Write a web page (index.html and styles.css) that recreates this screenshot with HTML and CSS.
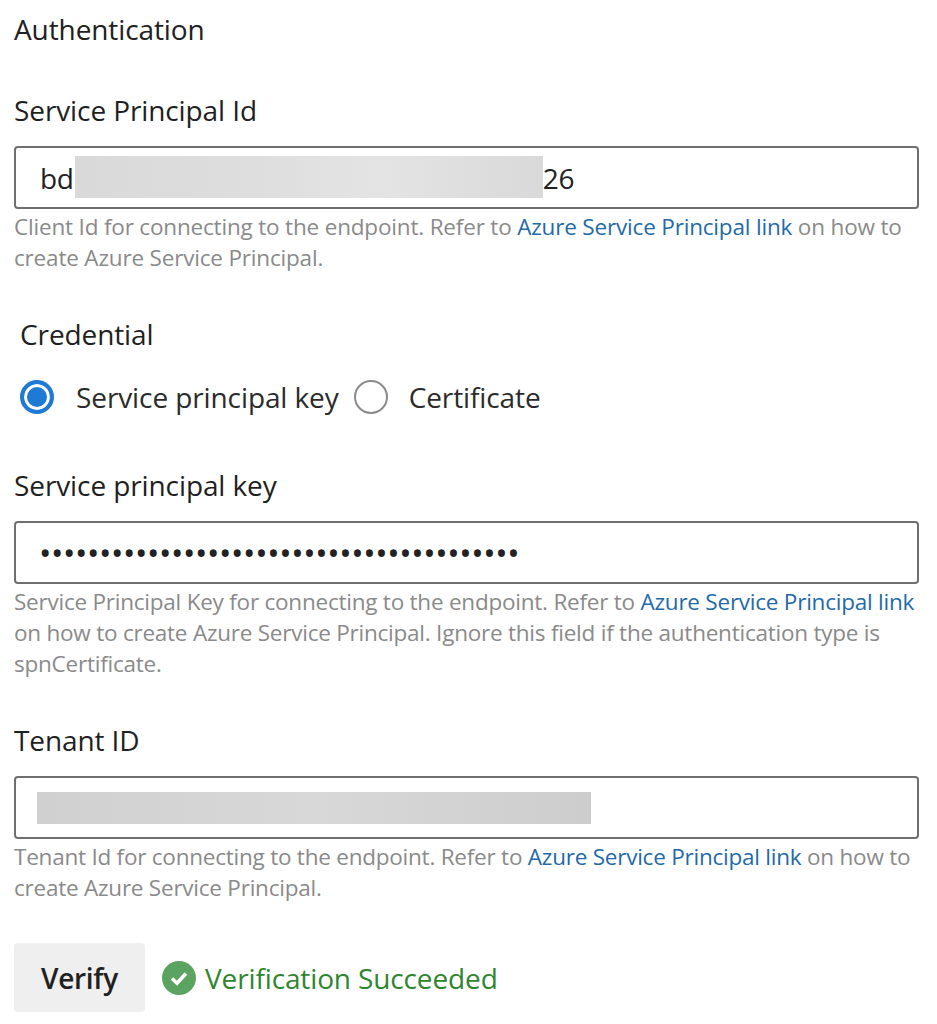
FILE: index.html
```html
<!DOCTYPE html>
<html lang="en">
<head>
<meta charset="utf-8">
<title>Authentication</title>
<link rel="stylesheet" href="styles.css">
</head>
<body>
<main class="form">
  <h2 class="title">Authentication</h2>

  <section class="field field-spn">
    <label class="label">Service Principal Id</label>
    <div class="input">
      <span>bd</span><span class="redact redact-id"></span><span>26</span>
    </div>
    <p class="help help-first">Client Id for connecting to the endpoint. Refer to <a href="#">Azure Service Principal link</a> on how to<br>create Azure Service Principal.</p>
  </section>

  <section class="credential">
    <div class="label">Credential</div>
    <div class="radios">
      <span class="radio radio-on"></span><span class="radio-text">Service principal key</span>
      <span class="radio"></span><span class="radio-text">Certificate</span>
    </div>
  </section>

  <section class="field field-key">
    <label class="label">Service principal key</label>
    <div class="input input-dots">
      <span class="dots">••••••••••••••••••••••••••••••••••••••••</span>
    </div>
    <p class="help">Service Principal Key for connecting to the endpoint. Refer to <a href="#">Azure Service Principal link</a><br>on how to create Azure Service Principal. Ignore this field if the authentication type is<br>spnCertificate.</p>
  </section>

  <section class="field field-tenant">
    <label class="label">Tenant ID</label>
    <div class="input input-tenant">
      <span class="redact redact-tenant"></span>
    </div>
    <p class="help">Tenant Id for connecting to the endpoint. Refer to <a href="#">Azure Service Principal link</a> on how to<br>create Azure Service Principal.</p>
  </section>

  <div class="actions">
    <button class="verify" type="button">Verify</button>
    <svg class="check" viewBox="0 0 34 34" aria-hidden="true">
      <circle cx="17" cy="17" r="17" fill="#5ba361"/>
      <path d="M10 17.5l5 4.8L24 12.5" fill="none" stroke="#fff" stroke-width="3.6"/>
    </svg>
    <span class="status">Verification Succeeded</span>
  </div>
</main>
</body>
</html>
```

FILE: styles.css
```css
* { box-sizing: border-box; }
html, body { margin: 0; background: #fff; }
body {
  font-family: "Open Sans", "Noto Sans", "Liberation Sans", sans-serif;
  color: #212121;
  height: 1024px;
  overflow: hidden;
}
.form { padding: 9px 18px 0 14px; }
.title {
  margin: 0;
  font-size: 28px;
  font-weight: 400;
  line-height: 40px;
  letter-spacing: -0.1px;
}
.label {
  display: block;
  font-size: 28px;
  line-height: 40px;
  letter-spacing: -0.1px;
  color: #1f1f1f;
}
.field-spn { margin-top: 41px; }
.field-key { margin-top: 49px; }
.field-tenant { margin-top: 41px; }
.input {
  display: flex;
  align-items: center;
  margin-top: 16px;
  height: 63px;
  padding: 0 24px;
  border: 2px solid #6f6f6f;
  border-radius: 4px;
  font-size: 28px;
  letter-spacing: -0.3px;
}
.redact { display: block; }
.redact-id {
  width: 468px;
  height: 42px;
  margin: 0 0 2px 1px;
  background: linear-gradient(90deg, #d9d9d9, #dedede 40%, #e4e4e4 65%, #d9d9d9);
}
.redact-tenant {
  width: 554px;
  height: 32px;
  background: linear-gradient(90deg, #d0d0d0, #d8d8d8 50%, #cdcdcd);
}
.input-tenant { padding-left: 21px; }
.input-dots { padding-left: 23px; }
.dots { letter-spacing: -0.4px; font-size: 33px; color: #222; }
.help {
  margin: 2px 0 0;
  font-size: 22.5px;
  line-height: 31px;
  letter-spacing: -0.23px;
  color: #8a8a8a;
  white-space: nowrap;
}
.help-first { letter-spacing: -0.18px; }
.help a { color: #1f6aa8; text-decoration: none; }
.credential { margin-top: 41px; padding-left: 6px; }
.radios {
  display: flex;
  align-items: center;
  margin-top: 24px;
  font-size: 28px;
  letter-spacing: -0.1px;
  color: #2b2b2b;
}
.radio {
  flex: none;
  width: 34px;
  height: 34px;
  border: 2px solid #8a8a8a;
  border-radius: 50%;
}
.radio-on {
  border: 4px solid #1f7ad6;
  background: #1f7ad6;
  box-shadow: inset 0 0 0 3px #fff;
}
.radio-text { margin: 0 15px 0 21px; }
.radio-on + .radio-text { margin-left: 22px; }
.actions {
  display: flex;
  align-items: center;
  margin-top: 40px;
}
.verify {
  width: 131px;
  height: 69px;
  border: 0;
  border-radius: 4px;
  background: #efefef;
  color: #212121;
  font-family: inherit;
  font-size: 28px;
  font-weight: 600;
  letter-spacing: -0.3px;
  padding: 0;
}
.check { width: 34px; height: 34px; margin-left: 17px; }
.status {
  margin-left: 9px;
  font-size: 28px;
  letter-spacing: -0.13px;
  color: #2e862f;
}
```
